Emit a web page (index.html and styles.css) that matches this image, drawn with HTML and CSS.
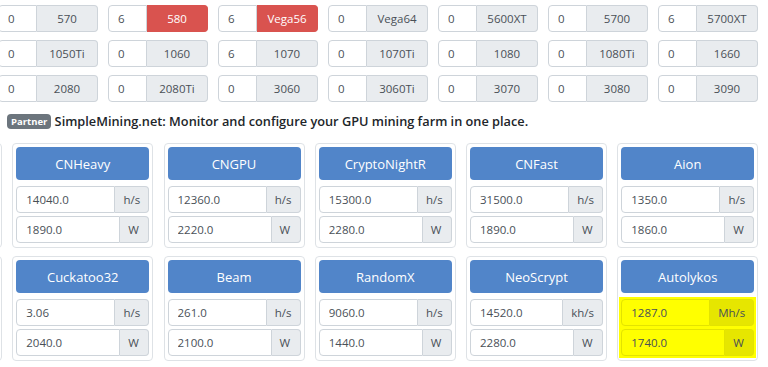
FILE: index.html
```html
<!DOCTYPE html>
<html lang="en">
<head>
    <meta charset="UTF-8">
    <meta name="viewport" content="width=device-width, initial-scale=1.0">
    <title>GPU Calculator</title>
    <link rel="stylesheet" href="styles.css">
</head>
<body>
    <div class="gpu-grid">
        <div class="gpu"><input value="0"><span class="gpu-name">570</span></div>
        <div class="gpu"><input value="6"><span class="gpu-name hot">580</span></div>
        <div class="gpu"><input value="6"><span class="gpu-name hot">Vega56</span></div>
        <div class="gpu"><input value="0"><span class="gpu-name">Vega64</span></div>
        <div class="gpu"><input value="0"><span class="gpu-name">5600XT</span></div>
        <div class="gpu"><input value="0"><span class="gpu-name">5700</span></div>
        <div class="gpu"><input value="6"><span class="gpu-name">5700XT</span></div>

        <div class="gpu"><input value="0"><span class="gpu-name">1050Ti</span></div>
        <div class="gpu"><input value="0"><span class="gpu-name">1060</span></div>
        <div class="gpu"><input value="6"><span class="gpu-name">1070</span></div>
        <div class="gpu"><input value="0"><span class="gpu-name">1070Ti</span></div>
        <div class="gpu"><input value="0"><span class="gpu-name">1080</span></div>
        <div class="gpu"><input value="0"><span class="gpu-name">1080Ti</span></div>
        <div class="gpu"><input value="0"><span class="gpu-name">1660</span></div>

        <div class="gpu"><input value="0"><span class="gpu-name">2080</span></div>
        <div class="gpu"><input value="0"><span class="gpu-name">2080Ti</span></div>
        <div class="gpu"><input value="0"><span class="gpu-name">3060</span></div>
        <div class="gpu"><input value="0"><span class="gpu-name">3060Ti</span></div>
        <div class="gpu"><input value="0"><span class="gpu-name">3070</span></div>
        <div class="gpu"><input value="0"><span class="gpu-name">3080</span></div>
        <div class="gpu"><input value="0"><span class="gpu-name">3090</span></div>
    </div>

    <p class="partner"><span class="badge">Partner</span> SimpleMining.net: Monitor and configure your GPU mining farm in one place.</p>

    <div class="algo-grid">
        <!-- scrolled off to the left, only the frame shows -->
        <div class="algo ghost">
            <button></button>
            <div class="field"><input><span class="unit"></span></div>
            <div class="field"><input><span class="unit"></span></div>
        </div>
        <div class="algo">
            <button>CNHeavy</button>
            <div class="field"><input value="14040.0"><span class="unit">h/s</span></div>
            <div class="field"><input value="1890.0"><span class="unit">W</span></div>
        </div>
        <div class="algo">
            <button>CNGPU</button>
            <div class="field"><input value="12360.0"><span class="unit">h/s</span></div>
            <div class="field"><input value="2220.0"><span class="unit">W</span></div>
        </div>
        <div class="algo">
            <button>CryptoNightR</button>
            <div class="field"><input value="15300.0"><span class="unit">h/s</span></div>
            <div class="field"><input value="2280.0"><span class="unit">W</span></div>
        </div>
        <div class="algo">
            <button>CNFast</button>
            <div class="field"><input value="31500.0"><span class="unit">h/s</span></div>
            <div class="field"><input value="1890.0"><span class="unit">W</span></div>
        </div>
        <div class="algo">
            <button>Aion</button>
            <div class="field"><input value="1350.0"><span class="unit">h/s</span></div>
            <div class="field"><input value="1860.0"><span class="unit">W</span></div>
        </div>

        <div class="algo ghost">
            <button></button>
            <div class="field"><input><span class="unit"></span></div>
            <div class="field"><input><span class="unit"></span></div>
        </div>
        <div class="algo">
            <button>Cuckatoo32</button>
            <div class="field"><input value="3.06"><span class="unit">h/s</span></div>
            <div class="field"><input value="2040.0"><span class="unit">W</span></div>
        </div>
        <div class="algo">
            <button>Beam</button>
            <div class="field"><input value="261.0"><span class="unit">h/s</span></div>
            <div class="field"><input value="2100.0"><span class="unit">W</span></div>
        </div>
        <div class="algo">
            <button>RandomX</button>
            <div class="field"><input value="9060.0"><span class="unit">h/s</span></div>
            <div class="field"><input value="1440.0"><span class="unit">W</span></div>
        </div>
        <div class="algo">
            <button>NeoScrypt</button>
            <div class="field"><input value="14520.0"><span class="unit">kh/s</span></div>
            <div class="field"><input value="2280.0"><span class="unit">W</span></div>
        </div>
        <div class="algo">
            <button>Autolykos</button>
            <div class="field mark"><input value="1287.0"><span class="unit">Mh/s</span></div>
            <div class="field mark"><input value="1740.0"><span class="unit">W</span></div>
        </div>
    </div>
</body>
</html>
```

FILE: styles.css
```css
body {
    margin: 0;
    padding: 0;
    font-family: "Open Sans", Arial, sans-serif;
    color: #495057;
    background-color: #fff;
    overflow: hidden;
}
input {
    font-family: inherit;
    color: #495057;
    background: #fff;
    border: 1px solid #ced4da;
    outline: none;
    margin: 0;
    box-sizing: border-box;
}
.gpu-grid {
    display: grid;
    grid-template-columns: repeat(7, 100px);
    column-gap: 10px;
    row-gap: 8px;
    margin: 5px 0 0 -2px;
}
.gpu {
    display: flex;
    height: 27px;
}
.gpu input {
    width: 39px;
    height: 100%;
    padding: 0 0 0 9px;
    font-size: 11.5px;
    border-radius: 4px 0 0 4px;
}
.gpu-name {
    flex: 1;
    text-align: center;
    line-height: 25px;
    font-size: 11.5px;
    background-color: #e9ecef;
    border: 1px solid #ced4da;
    border-left: none;
    border-radius: 0 4px 4px 0;
}
.gpu-name.hot {
    background-color: #d9534f;
    border-color: #d9534f;
    color: #fff;
}
.partner {
    margin: 11px 0 0 7px;
    font-size: 12.75px;
    font-weight: 600;
    color: #212529;
    line-height: 17px;
}
.badge {
    display: inline-block;
    background-color: #6c757d;
    color: #fff;
    font-size: 9.5px;
    font-weight: 700;
    line-height: 13px;
    padding: 1px 4px;
    border-radius: 4px;
    vertical-align: 1px;
}
.algo-grid {
    display: grid;
    grid-template-columns: repeat(6, 141px);
    column-gap: 10.25px;
    row-gap: 8px;
    margin: 13px 0 0 -139px;
}
.algo {
    border: 1px solid #dee2e6;
    border-radius: 4px;
    padding: 3px 3px 4px;
    display: flex;
    flex-direction: column;
    gap: 3px;
}
.algo button {
    height: 33px;
    margin-bottom: 3px;
    background-color: #5185c9;
    color: #fff;
    border: none;
    border-radius: 4px;
    font-family: inherit;
    font-size: 13px;
    cursor: pointer;
}
.field {
    display: flex;
    height: 27px;
}
.field input {
    flex: 1;
    min-width: 0;
    height: 100%;
    padding: 0 9px;
    font-size: 11.5px;
    border-radius: 4px 0 0 4px;
}
.unit {
    min-width: 12px;
    padding: 0 8px;
    line-height: 25px;
    font-size: 11.5px;
    background-color: #e9ecef;
    border: 1px solid #ced4da;
    border-left: none;
    border-radius: 0 4px 4px 0;
}
.field.mark {
    background-color: #ffff00;
    box-shadow: 0 0 0 2px #ffff00;
}
.field.mark input {
    background-color: #ffff00;
    border-color: #e3e300;
}
.field.mark .unit {
    background-color: #e6e600;
    border-color: #e3e300;
}
```
